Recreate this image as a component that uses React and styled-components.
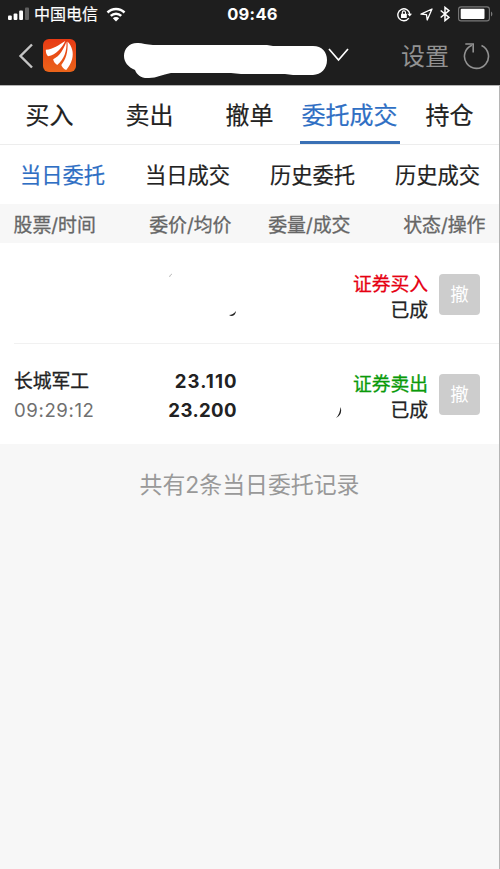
import styled, { createGlobalStyle } from "styled-components";

const GlobalStyle = createGlobalStyle`
  * {
    box-sizing: border-box;
  }

  body {
    margin: 0;
    background-color: #f7f7f7;
    font-family: Inter, "Noto Sans CJK SC", sans-serif;
    color: #222;
  }
`;

const Screen = styled.div`
  width: 500px;
  height: 869px;
  display: flex;
  flex-direction: column;
  overflow: hidden;
`;

const TopBar = styled.header`
  height: 85px;
  flex: none;
  background-color: #1e1e1e;
  color: #fff;
`;

const StatusBar = styled.div`
  height: 28px;
  display: grid;
  grid-template-columns: 1fr auto 1fr;
  align-items: center;
  padding: 0 7px 0 8px;
`;

const StatusGroup = styled.div`
  display: flex;
  align-items: center;
  justify-content: ${(props) => (props.$end ? "flex-end" : "flex-start")};
`;

const Carrier = styled.span`
  margin: 0 8px 0 5px;
  font-size: 16px;
  line-height: 28px;
  -webkit-text-stroke: 0.2px;
`;

const Time = styled.span`
  margin-left: 4px;
  font-size: 16.5px;
  font-weight: 700;
  line-height: 28px;
  letter-spacing: 0.3px;
`;

const NavBar = styled.div`
  height: 57px;
  display: flex;
  align-items: center;
  padding: 0 10px 2px 18px;
`;

const Account = styled.div`
  display: flex;
  align-items: center;
  margin-left: 47px;
  padding-top: 10px;

  svg:last-child {
    margin-top: -12px;
  }
`;

const Setting = styled.span`
  margin-left: auto;
  margin-right: 14px;
  padding-top: 2px;
  font-size: 24px;
  line-height: 34px;
  color: #929292;
`;

const Body = styled.main`
  position: relative;
  flex: 1;
  border-top: 1px solid #b5b5b5;

  &::after {
    content: "";
    position: absolute;
    top: 0;
    right: 0;
    bottom: 0;
    width: 1px;
    background-color: #b5b5b5;
  }
`;

const Tabs = styled.nav`
  display: grid;
  grid-template-columns: repeat(5, 100px);
  height: 59px;
  background-color: #fff;
  border-bottom: 1px solid #ededed;
`;

const Tab = styled.div`
  height: 58px;
  padding: 1px 1px 0 0;
  text-align: center;
  font-size: 24px;
  line-height: 58px;
  white-space: nowrap;
  color: ${(props) => (props.$active ? "#2f6fc4" : "#222")};
  border-bottom: ${(props) => (props.$active ? "3px solid #3a70b5" : "none")};
  -webkit-text-stroke: 0.2px;
`;

const SubTabs = styled.nav`
  display: grid;
  grid-template-columns: repeat(4, 125px);
  height: 59px;
  background-color: #fff;
`;

const SubTab = styled.div`
  padding: 1px 0 0;
  text-align: center;
  font-size: 21.3px;
  line-height: 59px;
  color: ${(props) => (props.$active ? "#2f6fc4" : "#222")};
  -webkit-text-stroke: 0.2px;
`;

const TableHead = styled.div`
  display: grid;
  grid-template-columns: 100px 118px 119px 135px;
  height: 39px;
  padding-left: 13.5px;
`;

const HeadCell = styled.div`
  font-size: 18.9px;
  line-height: 43px;
  white-space: nowrap;
  text-align: ${(props) => (props.$left ? "left" : "right")};
  color: #666;
  -webkit-text-stroke: 0.3px;
`;

const List = styled.div`
  background-color: #fff;
  padding-top: 1px;
`;

const Row = styled.div`
  display: grid;
  grid-template-columns: 100px 123px 105px 86px 52px;
  align-items: center;
  height: 100px;
  margin-left: 14px;
  border-bottom: 1px solid #f1f1f1;

  &:last-child {
    border-bottom-color: #fff;
  }
`;

const Cell = styled.div`
  display: flex;
  flex-direction: column;
  align-items: ${(props) => (props.$left ? "flex-start" : "flex-end")};
  justify-content: center;
  height: 56px;
`;

const StatusCell = styled(Cell)`
  padding-top: 9px;
`;

const QuoteCell = styled(Cell)`
  padding-top: 4px;
`;

const AmountCell = styled(Cell)`
  justify-content: flex-end;
  padding-bottom: 3px;
`;

const Name = styled.span`
  padding-top: 1px;
  font-size: 18.8px;
  line-height: 28px;
  -webkit-text-stroke: 0.3px;
`;

const Clock = styled.span`
  font-size: 18.6px;
  line-height: 29px;
  letter-spacing: 0.6px;
  color: #707070;
`;

const Price = styled.span`
  font-size: 18.6px;
  font-weight: 700;
  line-height: 29px;
  letter-spacing: ${(props) => (props.$loose ? "1.1px" : "0.4px")};
  margin-right: ${(props) => (props.$loose ? "-0.7px" : "0")};
`;

const Side = styled.span`
  font-size: 18.8px;
  line-height: 26px;
  color: ${(props) => (props.$buy ? "#e60012" : "#0a9a0a")};
  -webkit-text-stroke: 0.3px;
`;

const State = styled.span`
  font-size: 18.8px;
  line-height: 26px;
  -webkit-text-stroke: 0.3px;
`;

const CancelButton = styled.button`
  width: 41px;
  height: 41px;
  margin: 2px 0 0 11px;
  padding: 0;
  border: none;
  border-radius: 4px;
  background-color: #cdcdcd;
  color: #fff;
  font-family: inherit;
  font-size: 18.5px;
  line-height: 41px;
`;

const Summary = styled.p`
  margin: 24px 1px 0 0;
  text-align: center;
  font-size: 22.9px;
  line-height: 34px;
  color: #999;
`;

const Icon = styled.svg`
  display: block;
  flex: none;
  margin-left: ${(props) => props.$gap || 0}px;
`;

const tabs = ["买入", "卖出", "撤单", "委托成交", "持仓"];
const subTabs = ["当日委托", "当日成交", "历史委托", "历史成交"];
const columns = ["股票/时间", "委价/均价", "委量/成交", "状态/操作"];

const SignalIcon = () => (
  <Icon width="21" height="14" viewBox="0 0 21 14">
    <g fill="#fff">
      <rect x="0" y="8.5" width="3.8" height="4.5" rx="1" />
      <rect x="5.6" y="6.5" width="3.8" height="6.5" rx="1" />
      <rect x="11.2" y="3.5" width="3.8" height="9.5" rx="1" />
      <rect x="17" y="0.5" width="4" height="12.5" rx="1" opacity="0.3" />
    </g>
  </Icon>
);

const WifiIcon = () => (
  <Icon width="20" height="15" viewBox="0 0 20 15">
    <g fill="none" stroke="#fff" strokeWidth="2.5">
      <path d="M1.5 5.5C6.2 0.8 13.8 0.8 18.5 5.5" />
      <path d="M4.8 8.9C7.7 6 12.3 6 15.2 8.9" />
    </g>
    <path d="M10 14.5L6.8 11.2C8.5 9.6 11.5 9.6 13.2 11.2Z" fill="#fff" />
  </Icon>
);

const RotationLockIcon = () => (
  <Icon width="15" height="15" viewBox="0 0 15 15">
    <path
      d="M11.8 11.2A6 6 0 1 1 12.8 7"
      fill="none"
      stroke="#fff"
      strokeWidth="1.4"
    />
    <path d="M10.3 6.7H15L12.7 9.6Z" fill="#fff" />
    <rect x="4" y="6.7" width="5.8" height="4.2" rx="0.5" fill="#fff" />
    <path
      d="M5.3 7V5.5a1.6 1.6 0 0 1 3.2 0V7"
      fill="none"
      stroke="#fff"
      strokeWidth="1.1"
    />
  </Icon>
);

const LocationIcon = () => (
  <Icon $gap={8} width="13" height="13" viewBox="0 0 13 13">
    <path
      d="M1 6.2L12 1L7.2 12L6.5 6.7Z"
      fill="none"
      stroke="#fff"
      strokeWidth="1.3"
      strokeLinejoin="round"
    />
  </Icon>
);

const BluetoothIcon = () => (
  <Icon $gap={7} width="10" height="16" viewBox="0 0 10 16">
    <path
      d="M0.7 4.5L9 11.3L5 14.6V1.4L9 4.7L0.7 11.5"
      fill="none"
      stroke="#fff"
      strokeWidth="1.5"
    />
  </Icon>
);

const BatteryIcon = () => (
  <Icon $gap={8} width="35" height="16" viewBox="0 0 35 16">
    <rect
      x="0.6"
      y="0.9"
      width="30.8"
      height="14"
      rx="2.5"
      fill="none"
      stroke="#7a7a7a"
      strokeWidth="1.1"
    />
    <rect x="2.7" y="2.8" width="23.8" height="10.2" rx="1" fill="#fff" />
    <path d="M33 5.5C34.8 6.3 34.8 9.7 33 10.5Z" fill="#7a7a7a" />
  </Icon>
);

const BackIcon = () => (
  <Icon width="16" height="26" viewBox="0 0 16 26">
    <path
      d="M14 1.5L2.5 13L14 24.5"
      fill="none"
      stroke="#c4c4c4"
      strokeWidth="2.4"
    />
  </Icon>
);

const AppLogo = () => (
  <Icon $gap={9} width="33" height="33" viewBox="0 0 33 33">
    <defs>
      <linearGradient id="logo" x1="0" y1="0" x2="0" y2="1">
        <stop offset="0" stopColor="#e83a14" />
        <stop offset="1" stopColor="#ea641a" />
      </linearGradient>
    </defs>
    <rect width="33" height="33" rx="6" fill="url(#logo)" />
    <g fill="#fff">
      <path d="M2.8 10.8C10.5 10.3 15.5 6 22.3 2C19 8.5 13.5 16 5 17.3C3.2 15.6 2.8 13 2.8 10.8Z" />
      <path d="M10.2 20.3C17 17 20.6 10 23.4 2.8C24.2 11.5 21 20.8 14.2 26C12 24.8 10.5 22.5 10.2 20.3Z" />
      <path d="M18.3 26C22.8 20.5 25.2 13.5 24.5 2.6C29 7 31 14 29 20.5C27.8 24.5 25.6 28 23.2 31C21 30.2 18.9 28.2 18.3 26Z" />
    </g>
  </Icon>
);

const AccountMask = () => (
  <Icon width="205" height="38" viewBox="0 0 205 38">
    <path
      d="M14 1C18 0.5 23 2.6 30 3H144L150 4H190C199 4 204 10 204 18C204 27 198 32.5 190 33H170L162 32H118L108 31H48C39 32.5 34 36 26 36C18 36.5 14 33 12 28C5 25 1 20 1 14C1 7 6 1 14 1Z"
      fill="#fff"
    />
  </Icon>
);

const ArrowDownIcon = () => (
  <Icon width="21" height="14" viewBox="0 0 21 14">
    <path d="M1 1L10.5 12L20 1" fill="none" stroke="#fff" strokeWidth="1.7" />
  </Icon>
);

const RefreshIcon = () => (
  <Icon width="27" height="28" viewBox="0 0 27 28">
    <g fill="none" stroke="#929292" strokeWidth="1.6">
      <path d="M18.5 3.5A12 12 0 1 1 8.9 3.3" />
      <path d="M2.3 2H10.2V10.5" />
    </g>
  </Icon>
);

const PriceSmudges = () => (
  <Icon width="68" height="45" viewBox="0 0 68 45">
    <path d="M0.5 4Q1.2 1.5 3 1" fill="none" stroke="#aaa" strokeWidth="0.8" />
    <path d="M60 42Q64 42 67 38Q66.5 43 62 43Z" fill="#222" />
  </Icon>
);

const AmountSmudge = () => (
  <Icon width="6" height="12" viewBox="0 0 6 12">
    <path d="M4.5 0Q7 7 0 11Q4 7 4.5 0Z" fill="#222" />
  </Icon>
);

const App = () => {
  return (
    <>
      <GlobalStyle />
      <Screen>
        <TopBar>
          <StatusBar>
            <StatusGroup>
              <SignalIcon />
              <Carrier>中国电信</Carrier>
              <WifiIcon />
            </StatusGroup>
            <Time>09:46</Time>
            <StatusGroup $end>
              <RotationLockIcon />
              <LocationIcon />
              <BluetoothIcon />
              <BatteryIcon />
            </StatusGroup>
          </StatusBar>
          <NavBar>
            <BackIcon />
            <AppLogo />
            <Account>
              <AccountMask />
              <ArrowDownIcon />
            </Account>
            <Setting>设置</Setting>
            <RefreshIcon />
          </NavBar>
        </TopBar>
        <Body>
          <Tabs>
            {tabs.map((tab) => (
              <Tab key={tab} $active={tab === "委托成交"}>
                {tab}
              </Tab>
            ))}
          </Tabs>
          <SubTabs>
            {subTabs.map((tab) => (
              <SubTab key={tab} $active={tab === "当日委托"}>
                {tab}
              </SubTab>
            ))}
          </SubTabs>
          <TableHead>
            {columns.map((column, index) => (
              <HeadCell key={column} $left={index === 0}>
                {column}
              </HeadCell>
            ))}
          </TableHead>
          <List>
            <Row>
              <Cell $left />
              <QuoteCell>
                <PriceSmudges />
              </QuoteCell>
              <Cell />
              <StatusCell>
                <Side $buy>证券买入</Side>
                <State>已成</State>
              </StatusCell>
              <CancelButton>撤</CancelButton>
            </Row>
            <Row>
              <QuoteCell $left>
                <Name>长城军工</Name>
                <Clock>09:29:12</Clock>
              </QuoteCell>
              <QuoteCell>
                <Price $loose>23.110</Price>
                <Price>23.200</Price>
              </QuoteCell>
              <AmountCell>
                <AmountSmudge />
              </AmountCell>
              <StatusCell>
                <Side>证券卖出</Side>
                <State>已成</State>
              </StatusCell>
              <CancelButton>撤</CancelButton>
            </Row>
          </List>
          <Summary>共有2条当日委托记录</Summary>
        </Body>
      </Screen>
    </>
  );
};

export default App;
